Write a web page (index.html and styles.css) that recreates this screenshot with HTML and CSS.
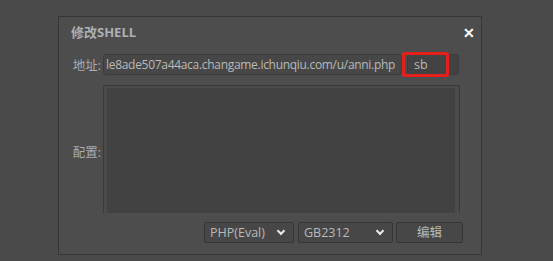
FILE: index.html
```html
<!DOCTYPE html>
<html lang="zh-CN">
<head>
  <meta charset="UTF-8" />
  <title>修改SHELL</title>
  <link rel="stylesheet" href="styles.css">
</head>
<body>
  <div class="dialog">
    <div class="dialog-head">
      <span class="title">修改SHELL</span>
      <span class="close">&#10005;</span>
    </div>
    <div class="row">
      <label class="lbl">地址:</label>
      <div class="field url">le8ade507a44aca.changame.ichunqiu.com/u/anni.php</div>
      <div class="pass-wrap">
        <div class="field pass">sb</div>
        <div class="mark"></div>
      </div>
    </div>
    <div class="row conf-row">
      <label class="lbl">配置:</label>
      <div class="conf"><div class="conf-inner"></div></div>
    </div>
    <div class="actions">
      <div class="sel sel-type">PHP(Eval)<span class="arrow"></span></div>
      <div class="sel sel-enc">GB2312<span class="arrow"></span></div>
      <button class="btn">编辑</button>
    </div>
  </div>
</body>
</html>
```

FILE: styles.css
```css
body {
  margin: 0;
  background: #4a4a4a;
  font-family: "Open Sans", "Noto Sans CJK SC", sans-serif;
  color: #b9b9b9;
  font-size: 12px;
}
.dialog {
  margin: 16px 0 0 58px;
  width: 398px;
  height: 237px;
  border: 1px solid #363636;
  background: #4d4d4d;
  padding: 0 12px;
}
.dialog-head {
  display: flex;
  justify-content: space-between;
  align-items: center;
  height: 30px;
}
.title {
  font-weight: bold;
  font-size: 13px;
  color: #aeb0b2;
  margin-top: -1px;
}
.close {
  color: #fff;
  font-size: 14px;
  font-weight: bold;
  margin-right: -6px;
}
.row {
  display: flex;
  align-items: center;
  margin-top: 7px;
}
.lbl {
  width: 30px;
  margin-right: 2px;
  text-align: right;
  color: #a9abad;
  font-size: 12.5px;
}
.field {
  height: 21px;
  box-sizing: border-box;
  border: 1px solid #3c3c3c;
  border-radius: 3px;
  background: #474747;
  line-height: 19px;
  padding: 0 2px;
  white-space: nowrap;
  overflow: hidden;
}
.url {
  width: 299px;
  font-size: 12px;
  letter-spacing: -0.3px;
}
.pass-wrap {
  position: relative;
  margin-left: 5px;
}
.pass {
  width: 52px;
  background: #434343;
  padding-left: 6px;
  font-size: 12.5px;
}
.mark {
  position: absolute;
  left: -5px;
  top: -2px;
  width: 47px;
  height: 25px;
  box-sizing: border-box;
  border: 3px solid #e3201b;
  border-radius: 3px;
}
.conf-row {
  margin-top: 10px;
}
.conf-row .lbl {
  margin-top: 5px;
}
.conf {
  width: 357px;
  height: 128px;
  box-sizing: border-box;
  border: 1px solid #3a3a3a;
  border-bottom: none;
  border-radius: 3px 3px 0 0;
  background: #4b4b4b;
  padding: 2px 4px 0 3px;
}
.conf-inner {
  height: 100%;
  background: #424242;
}
.actions {
  display: flex;
  justify-content: flex-end;
  gap: 4px;
  margin-top: 9px;
  margin-right: 6px;
}
.sel, .btn {
  height: 21px;
  box-sizing: border-box;
  border: 1px solid #363636;
  border-radius: 2px;
  background: #474747;
  color: #b9b9b9;
  font-family: "Open Sans", "Noto Sans CJK SC", sans-serif;
  font-size: 12.5px;
  line-height: 19px;
}
.sel {
  position: relative;
  padding-left: 5px;
}
.sel-type { width: 90px; }
.sel-enc { width: 95px; margin-right: -1px; }
.arrow {
  position: absolute;
  right: 9px;
  top: 5px;
  width: 4px;
  height: 4px;
  border-right: 2px solid #e8e8e8;
  border-bottom: 2px solid #e8e8e8;
  transform: rotate(45deg);
}
.btn {
  width: 67px;
  padding: 0;
}
```
